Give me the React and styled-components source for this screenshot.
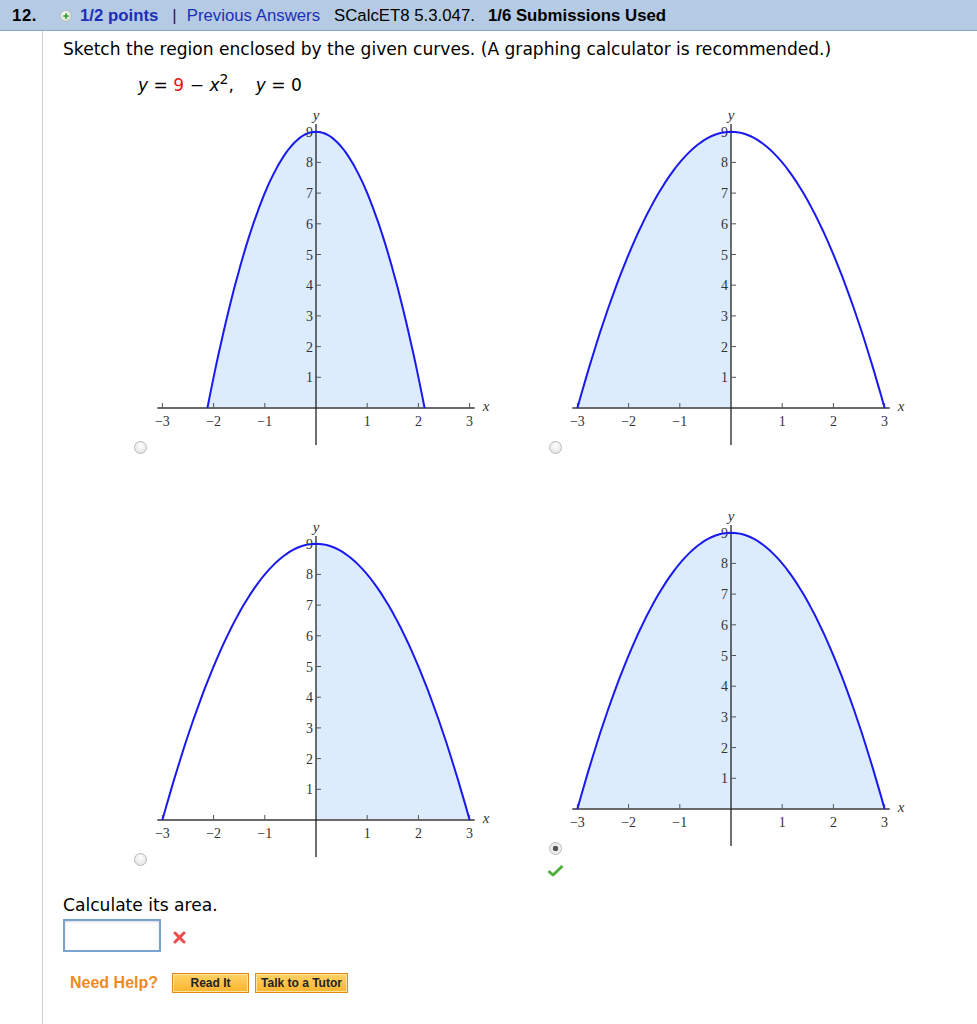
import styled, { createGlobalStyle } from "styled-components";

const GlobalStyle = createGlobalStyle`
  html, body {
    margin: 0;
    padding: 0;
    background: #fff;
  }
  body {
    font-family: "Liberation Sans", Arial, sans-serif;
    color: #000;
  }
`;

const UX = 51.2;
const UY = 30.7;
const OX = 165;
const OY = 304;

function Plot({ a, shade }) {
  const r = Math.sqrt(9 / a);
  const px = (x) => OX + x * UX;
  const py = (y) => OY - y * UY;
  const pts = (lo, hi) => {
    const out = [];
    for (let i = 0; i <= 80; i++) {
      const x = lo + ((hi - lo) * i) / 80;
      out.push(`${px(x).toFixed(1)},${py(9 - a * x * x).toFixed(1)}`);
    }
    return out;
  };
  const range = shade === "left" ? [-r, 0] : shade === "right" ? [0, r] : [-r, r];
  const fill = `M${px(range[0]).toFixed(1)},${OY} L${pts(range[0], range[1]).join(" L")} L${px(range[1]).toFixed(1)},${OY} Z`;
  const curve = `M${pts(-r, r).join(" L")}`;

  return (
    <svg width="340" height="336" style={{ overflow: "visible", display: "block" }}>
      <path d={fill} fill="#dcecfd" />
      <line x1={px(-3.1)} y1={OY} x2={px(3.1)} y2={OY} stroke="#6a6a6a" strokeWidth="2" />
      {[-3, -2, -1, 1, 2, 3].map((t) => (
        <g key={t}>
          <line x1={px(t)} y1={OY} x2={px(t)} y2={OY - 5} stroke="#555" strokeWidth="1" />
          <text x={px(t)} y={OY + 18} textAnchor="middle" fontFamily="Liberation Serif, serif" fontSize="14" fill="#333">
            {t < 0 ? `\u2212${-t}` : t}
          </text>
        </g>
      ))}
      <line x1={OX} y1={py(9.25)} x2={OX} y2={OY + 37} stroke="#222" strokeWidth="1.3" />
      {[1, 2, 3, 4, 5, 6, 7, 8, 9].map((t) => (
        <g key={t}>
          <line x1={OX} y1={py(t)} x2={OX + 5} y2={py(t)} stroke="#555" strokeWidth="1" />
          <text x={OX - 3} y={py(t) + 5} textAnchor="end" fontFamily="Liberation Serif, serif" fontSize="14" fill="#333">
            {t}
          </text>
        </g>
      ))}
      <path d={curve} fill="none" stroke="#1a1aee" strokeWidth="2" />
      <text x={OX + 170} y={OY + 3} textAnchor="middle" fontFamily="Liberation Serif, serif" fontStyle="italic" fontSize="15" fill="#333">
        x
      </text>
      <text x={OX} y={py(9) - 12} textAnchor="middle" fontFamily="Liberation Serif, serif" fontStyle="italic" fontSize="15" fill="#333">
        y
      </text>
    </svg>
  );
}

function PlusIcon() {
  return (
    <svg width="12" height="12" viewBox="0 0 12 12">
      <defs>
        <radialGradient id="pg" cx="0.4" cy="0.35" r="0.7">
          <stop offset="0" stopColor="#ffffff" />
          <stop offset="1" stopColor="#cfd8cf" />
        </radialGradient>
      </defs>
      <circle cx="6" cy="6" r="5.5" fill="url(#pg)" stroke="#aab5aa" strokeWidth="0.6" />
      <path d="M6 3.2 V8.8 M3.2 6 H8.8" stroke="#2f9a2f" strokeWidth="1.7" />
    </svg>
  );
}

function CheckIcon() {
  return (
    <svg width="17" height="13" viewBox="0 0 17 13">
      <path d="M1.5 7 L6 11 L15.5 2" fill="none" stroke="#4fae3c" strokeWidth="3" strokeLinejoin="round" />
    </svg>
  );
}

function CrossIcon() {
  return (
    <svg width="13" height="13" viewBox="0 0 13 13">
      <path d="M2 2 L11 11 M11 2 L2 11" stroke="#ee4a4a" strokeWidth="3" strokeLinecap="round" />
    </svg>
  );
}

export default function App() {
  const choices = [
    { a: 2, shade: "full" },
    { a: 1, shade: "left" },
    { a: 1, shade: "right" },
    { a: 1, shade: "full", selected: true },
  ];

  return (
    <Page>
      <GlobalStyle />
      <Header>
        <QNum>12.</QNum>
        <HeaderInfo>
          <PlusIcon />
          <Points>1/2 points</Points>
          <Sep>|</Sep>
          <Prev>Previous Answers</Prev>
          <span>SCalcET8 5.3.047.</span>
          <Bold>1/6 Submissions Used</Bold>
        </HeaderInfo>
      </Header>
      <Body>
        <Gutter />
        <Content>
          <Prompt>Sketch the region enclosed by the given curves. (A graphing calculator is recommended.)</Prompt>
          <Equation>
            <i>y</i> = <Red>9</Red> − <i>x</i>
            <sup>2</sup>,&nbsp;&nbsp;&nbsp; <i>y</i> = 0
          </Equation>
          <Choices>
            {choices.map((c, i) => (
              <Choice key={i}>
                <Plot a={c.a} shade={c.shade} />
                <Radio $checked={c.selected} />
                {c.selected && (
                  <Mark>
                    <CheckIcon />
                  </Mark>
                )}
              </Choice>
            ))}
          </Choices>
          <Prompt2>Calculate its area.</Prompt2>
          <AnswerRow>
            <AnswerBox />
            <CrossIcon />
          </AnswerRow>
          <HelpRow>
            <NeedHelp>Need Help?</NeedHelp>
            <HelpButton>Read It</HelpButton>
            <HelpButton>Talk to a Tutor</HelpButton>
          </HelpRow>
        </Content>
      </Body>
    </Page>
  );
}

const Page = styled.div`
  width: 977px;
  min-height: 1024px;
  display: flex;
  flex-direction: column;
`;

const Header = styled.div`
  display: flex;
  align-items: center;
  height: 31px;
  padding-top: 1px;
  box-sizing: border-box;
  background: #b4cbe3;
  border-bottom: 1px solid #8ea6bf;
  font-size: 16.8px;
`;

const QNum = styled.div`
  width: 44px;
  padding-left: 12px;
  box-sizing: border-box;
  font-weight: bold;
  letter-spacing: 0.6px;
`;

const HeaderInfo = styled.div`
  display: flex;
  align-items: center;
  gap: 6px;
  padding-left: 16px;
  svg {
    margin-right: 2px;
  }
`;

const Points = styled.span`
  font-weight: bold;
  color: #1d2fb8;
  margin-right: 8px;
`;

const Sep = styled.span`
  color: #222;
  margin-right: 4px;
`;

const Prev = styled.span`
  color: #1d2fb8;
  margin-right: 8px;
`;

const Bold = styled.span`
  font-weight: bold;
  margin-left: 7px;
`;

const Body = styled.div`
  display: flex;
  flex: 1;
`;

const Gutter = styled.div`
  width: 42px;
  border-right: 1px solid #cfcfcf;
`;

const Content = styled.div`
  flex: 1;
  padding: 8px 0 20px 20px;
  font-family: "DejaVu Sans", Verdana, sans-serif;
  font-size: 17.1px;
`;

const Prompt = styled.div`
  line-height: 20px;
`;

const Equation = styled.div`
  margin-top: 16px;
  margin-left: 75px;
  line-height: 20px;
  i {
    font-style: italic;
  }
  sup {
    font-size: 14px;
    line-height: 0;
  }
`;

const Red = styled.span`
  color: #e8130f;
`;

const Choices = styled.div`
  display: grid;
  grid-template-columns: 415px 415px;
  align-items: center;
  row-gap: 51px;
  margin-top: 9px;
  padding-left: 71px;
`;

const Choice = styled.div`
  display: flex;
  flex-direction: column;
  svg {
    margin-left: 17px;
  }
`;

const Radio = styled.span`
  display: block;
  width: 13px;
  height: 13px;
  margin-top: 1px;
  box-sizing: border-box;
  border-radius: 50%;
  border: 1px solid #b9b9b9;
  background: ${(p) =>
    p.$checked
      ? "radial-gradient(circle, #555 0 2.5px, #e8e8e8 3px, #f6f6f6 100%)"
      : "radial-gradient(circle at 50% 35%, #fff, #dedede)"};
`;

const Mark = styled.div`
  margin-top: 9px;
  height: 13px;
  svg {
    margin-left: -2px;
    display: block;
  }
`;

const Prompt2 = styled.div`
  margin-top: 18px;
  line-height: 20px;
`;

const AnswerRow = styled.div`
  display: flex;
  align-items: center;
  gap: 12px;
  margin-top: 4px;
  svg {
    margin-top: 4px;
  }
`;

const AnswerBox = styled.div`
  width: 98px;
  height: 33px;
  box-sizing: border-box;
  border: 2px solid #7aa3d3;
  box-shadow: inset 0 1px 2px rgba(0, 0, 0, 0.15);
  background: #fff;
`;

const HelpRow = styled.div`
  display: flex;
  align-items: center;
  gap: 6px;
  margin-top: 21px;
  margin-left: 7px;
`;

const NeedHelp = styled.span`
  font-family: "Liberation Sans", Arial, sans-serif;
  font-weight: bold;
  font-size: 16px;
  color: #ef8a1f;
  margin-right: 8px;
`;

const HelpButton = styled.span`
  display: inline-flex;
  align-items: center;
  justify-content: center;
  height: 20px;
  padding: 0 14px;
  box-sizing: border-box;
  min-width: 77px;
  font-family: "Liberation Sans", Arial, sans-serif;
  font-weight: bold;
  font-size: 12px;
  color: #222;
  background: linear-gradient(#ffd266, #fbb42e);
  border: 1px solid #e08a16;
  box-shadow: inset 0 0 0 1px #ffe3a0;
  &:last-child {
    padding: 0 5px;
  }
`;
